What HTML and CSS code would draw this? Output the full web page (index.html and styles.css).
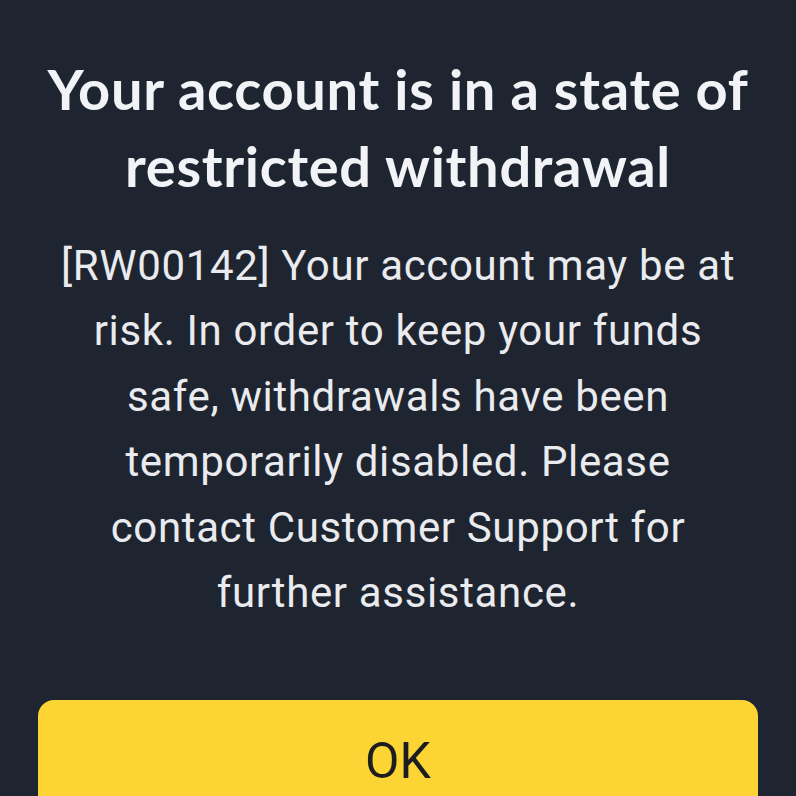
FILE: index.html
```html
<!DOCTYPE html>
<html lang="en">
<head>
<meta charset="utf-8">
<link rel="stylesheet" href="styles.css">
</head>
<body>
<div class="dialog">
  <h1 class="title">Your account is in a state of restricted withdrawal</h1>
  <p class="message">[RW00142] Your account may be at risk. In order to keep your funds safe, withdrawals have been temporarily disabled. Please contact Customer Support for further assistance.</p>
  <button class="ok-btn">OK</button>
</div>
</body>
</html>
```
FILE: styles.css
```css
html, body {
  margin: 0;
  padding: 0;
  background: #1f2530;
  height: 100%;
  overflow: hidden;
}
.dialog {
  display: flex;
  flex-direction: column;
  align-items: center;
  padding: 50px 38px 0;
  font-family: Roboto, "Noto Sans", sans-serif;
}
.title {
  margin: 0;
  font-family: Lato, Roboto, sans-serif;
  font-weight: 700;
  font-size: 56px;
  line-height: 77px;
  letter-spacing: 0.7px;
  color: #f1f3f6;
  text-align: center;
  width: 740px;
}
.message {
  margin: 29px 0 0;
  font-size: 42px;
  line-height: 65.4px;
  font-weight: 400;
  letter-spacing: 0.65px;
  color: #e9ebee;
  text-align: center;
  width: 700px;
}
.ok-btn {
  display: block;
  margin-top: 75px;
  width: 720px;
  border: none;
  border-radius: 16px;
  background: #fcd535;
  color: #1c1d20;
  font-family: Roboto, sans-serif;
  font-size: 50px;
  line-height: 60px;
  padding: 31px 0 40px;
}
```
